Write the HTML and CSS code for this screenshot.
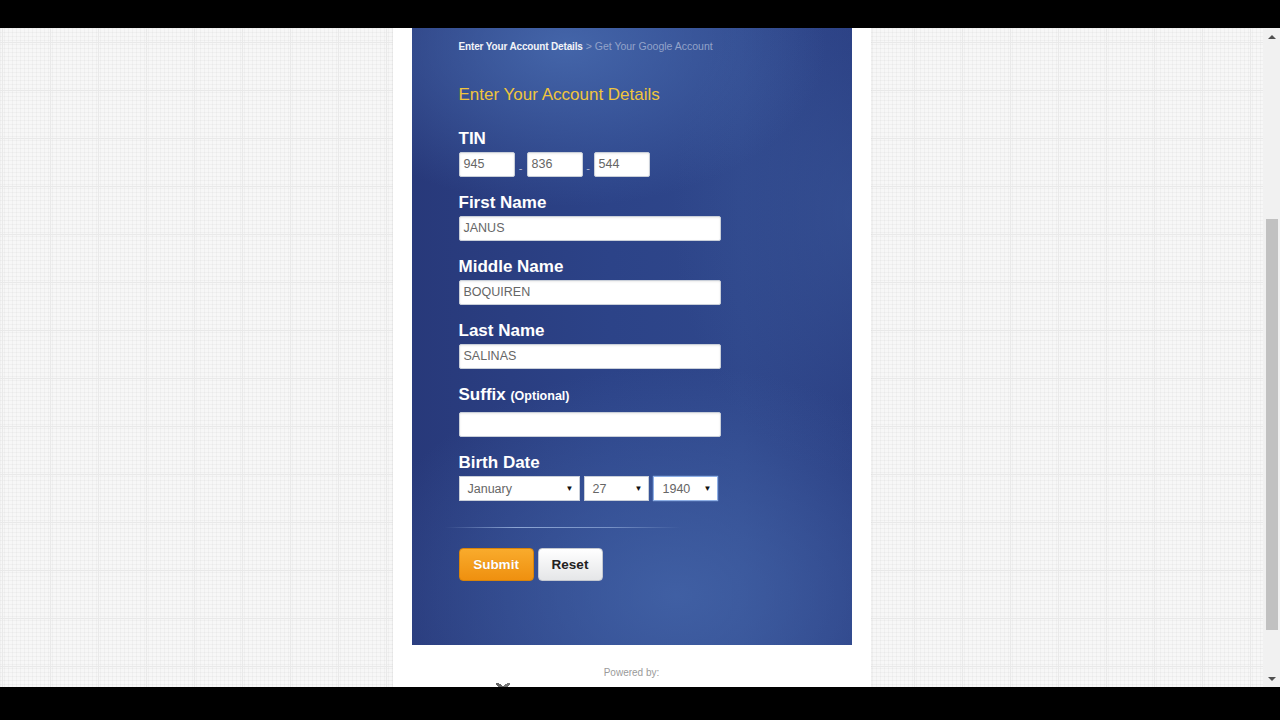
FILE: index.html
```html
<!DOCTYPE html>
<html>
<head>
<meta charset="utf-8">
<link rel="stylesheet" href="styles.css">
</head>
<body>
<div class="bar-top"></div>
<div class="screen">
  <div class="page">
    <div class="container">
      <div class="panel">
        <div class="crumbs"><span class="cur">Enter Your Account Details</span> &gt; Get Your Google Account</div>
        <h1 class="title">Enter Your Account Details</h1>

        <div class="field">
          <div class="label">TIN</div>
          <div class="tin">
            <div class="input short">945</div>
            <span class="dash">-</span>
            <div class="input short">836</div>
            <span class="dash">-</span>
            <div class="input short">544</div>
          </div>
        </div>

        <div class="field">
          <div class="label">First Name</div>
          <div class="input wide">JANUS</div>
        </div>

        <div class="field">
          <div class="label">Middle Name</div>
          <div class="input wide">BOQUIREN</div>
        </div>

        <div class="field">
          <div class="label">Last Name</div>
          <div class="input wide">SALINAS</div>
        </div>

        <div class="field">
          <div class="label">Suffix <span class="opt">(Optional)</span></div>
          <div class="input wide suffix"></div>
        </div>

        <div class="field">
          <div class="label">Birth Date</div>
          <div class="dates">
            <div class="select month"><span>January</span><span class="arrow">&#9660;</span></div>
            <div class="select day"><span>27</span><span class="arrow">&#9660;</span></div>
            <div class="select year focus"><span>1940</span><span class="arrow">&#9660;</span></div>
          </div>
        </div>

        <div class="sep"></div>

        <div class="buttons">
          <button class="btn submit">Submit</button>
          <button class="btn reset">Reset</button>
        </div>
      </div>
      <div class="powered">Powered by:</div>
      <div class="logo-row"><span class="logo-mark"></span></div>
    </div>
  </div>
  <div class="scrollbar">
    <div class="sb-up"></div>
    <div class="sb-track"><div class="sb-thumb"></div></div>
    <div class="sb-down"></div>
  </div>
</div>
<div class="bar-bottom"></div>
</body>
</html>
```

FILE: styles.css
```css
* { box-sizing: border-box; }
html, body { margin: 0; padding: 0; }
body {
  background: #000;
  width: 1280px;
  height: 720px;
  overflow: hidden;
  font-family: "Liberation Sans", Arial, sans-serif;
}
.bar-top { height: 28px; background: #000; }
.bar-bottom { height: 33px; background: #000; }

.screen {
  height: 659px;
  display: flex;
  overflow: hidden;
}
.page {
  flex: 1;
  height: 100%;
  overflow: hidden;
  display: flex;
  justify-content: center;
  background-color: #f7f7f7;
  background-image:
    linear-gradient(#e9e9e9 1px, transparent 1px),
    linear-gradient(90deg, #e9e9e9 1px, transparent 1px),
    linear-gradient(rgba(0,0,0,0.028) 1px, transparent 1px),
    linear-gradient(90deg, rgba(0,0,0,0.028) 1px, transparent 1px);
  background-size: 48px 48px, 48px 48px, 4px 4px, 4px 4px;
  background-position: 2px 14px, 2px 14px, 0 0, 0 0;
}
.container {
  width: 478px;
  height: 100%;
  background: #fff;
  padding: 0 19px;
  box-shadow: 0 0 2px rgba(0,0,0,0.08);
  overflow: hidden;
}
.panel {
  width: 440px;
  padding: 12px 47px 64px 47px;
  color: #fff;
  background:
    radial-gradient(ellipse 260px 160px at 35% 3%, rgba(74,110,178,0.8), rgba(74,110,178,0) 100%),
    radial-gradient(ellipse 320px 230px at 60% 92%, rgba(70,104,172,0.75), rgba(70,104,172,0) 100%),
    radial-gradient(ellipse 180px 260px at 100% 30%, rgba(62,94,160,0.45), rgba(62,94,160,0) 100%),
    linear-gradient(90deg, #28397a 0%, #2c4388 45%, #2f478b 75%, #2a3e82 100%);
}
.crumbs {
  font-size: 10.5px;
  line-height: 12px;
  color: #93a3c9;
}
.crumbs .cur { color: #f2f4f8; font-weight: bold; font-size: 10px; letter-spacing: -0.15px; }
.title {
  margin: 32px 0 0;
  font-size: 17px;
  line-height: 20px;
  font-weight: normal;
  color: #f0c53c;
}
.field { margin-top: 16px; }
.title + .field { margin-top: 24px; }
.label {
  font-size: 17px;
  line-height: 19px;
  font-weight: bold;
  color: #fff;
}
.label .opt { font-size: 12.5px; }
.input {
  margin-top: 4px;
  height: 25px;
  background: #fff;
  border: 1px solid #c9cfd9;
  border-radius: 2px;
  box-shadow: inset 0 1px 2px rgba(0,0,0,0.08);
  font-size: 12.5px;
  line-height: 23px;
  color: #666;
  padding-left: 4px;
}
.input.wide { width: 262px; }
.input.suffix { margin-top: 6px; }
.tin { display: flex; align-items: flex-end; margin-top: 4px; }
.tin .input { margin-top: 0; }
.input.short { width: 56px; }
.dash {
  width: 12px;
  text-align: center;
  font-size: 11px;
  line-height: 14px;
  color: #b4bdd2;
  padding-bottom: 2px;
}
.tin .dash:nth-of-type(2) { width: 11px; }

.dates { display: flex; gap: 4px; margin-top: 4px; }
.select {
  height: 25px;
  background: #fff;
  border: 1px solid #c9cfd9;
  display: flex;
  align-items: center;
  justify-content: space-between;
  padding: 0 5px 0 8px;
  font-size: 12.5px;
  color: #666;
}
.select .arrow { font-size: 8px; color: #111; }
.select.month { width: 121px; }
.select.day { width: 65px; }
.select.year { width: 65px; padding-left: 9px; }
.select.focus { border-color: #8fb0e6; box-shadow: 0 0 1px #9fc0f0; }

.sep {
  margin: 26px 0 0 -14px;
  width: 236px;
  height: 1px;
  background: linear-gradient(90deg, rgba(160,185,230,0) 0%, rgba(170,195,235,0.75) 30%, rgba(170,195,235,0.55) 70%, rgba(160,185,230,0) 100%);
}
.buttons { display: flex; gap: 4px; margin-top: 20px; }
.btn {
  height: 33px;
  border-radius: 4px;
  font-family: "Liberation Sans", Arial, sans-serif;
  font-size: 13.5px;
  font-weight: bold;
  padding: 0;
  cursor: pointer;
}
.submit {
  width: 75px;
  color: #fff;
  border: 1px solid #d98409;
  background: linear-gradient(#f9ab2c, #ef900f);
  text-shadow: 0 0 1px rgba(150,80,0,0.4);
}
.reset {
  width: 65px;
  color: #222;
  border: 1px solid #c4c8d0;
  background: linear-gradient(#ffffff, #e5e6e8);
}

.powered {
  margin-top: 22px;
  text-align: center;
  font-size: 10px;
  line-height: 12px;
  color: #9a9a9a;
}
.logo-row { height: 20px; padding-left: 84px; padding-top: 4px; }
.logo-mark {
  display: block;
  width: 14px;
  height: 10px;
  background: linear-gradient(35deg, transparent 40%, #666 40%, #666 60%, transparent 60%),
              linear-gradient(-35deg, transparent 40%, #777 40%, #777 60%, transparent 60%);
}

.scrollbar {
  width: 17px;
  height: 100%;
  background: #f1f1f1;
  display: flex;
  flex-direction: column;
  align-items: center;
}
.sb-up, .sb-down {
  height: 17px;
  width: 17px;
  display: flex;
  align-items: center;
  justify-content: center;
}
.sb-up::after {
  content: "";
  border-left: 4px solid transparent;
  border-right: 4px solid transparent;
  border-bottom: 4px solid #505050;
}
.sb-down::after {
  content: "";
  border-left: 4px solid transparent;
  border-right: 4px solid transparent;
  border-top: 4px solid #505050;
}
.sb-track { flex: 1; width: 100%; padding: 174px 2px 0 3px; }
.sb-thumb { height: 411px; background: #c1c1c1; }
```
